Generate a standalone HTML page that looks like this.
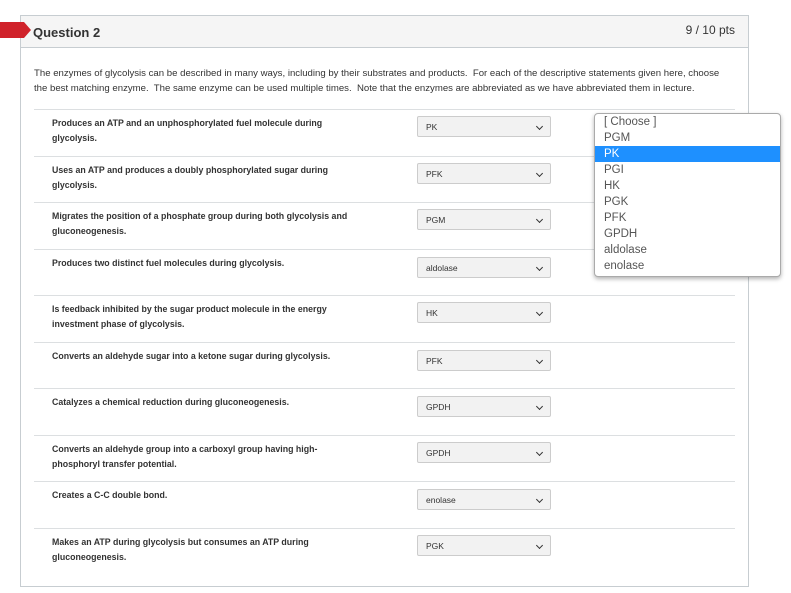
<!DOCTYPE html><html><head><style>
body{margin:0;background:#fff;font-family:"Liberation Sans",sans-serif;color:#2d3b45;position:relative;width:791px;height:593px;overflow:hidden}
.panel{position:absolute;left:20px;top:15px;width:727px;height:570px;border:1px solid #c7cdd1}
.hdr{height:31px;background:#f5f5f5;border-bottom:1px solid #c7cdd1;position:relative}
.hdr .t{position:absolute;left:12px;top:9px;font-size:13px;font-weight:bold;color:#333}
.hdr .p{position:absolute;right:13px;top:7px;font-size:12px;color:#333}
.flag{position:absolute;left:0;top:22px;z-index:2}
.intro{position:absolute;left:13px;top:51px;font-size:9.6px;line-height:14.5px;color:#333;width:710px;white-space:nowrap}
.row{position:absolute;left:13px;width:701px;border-top:1px solid #dcdfe1;height:46px}
.q{position:absolute;left:18px;top:6px;width:300px;font-size:8.8px;font-weight:bold;line-height:15px;color:#333}
.sel{position:absolute;left:383px;top:6px;width:134px;height:21px;background:#f2f2f2;border:1px solid #ccc;border-radius:2px;font-size:8.5px;line-height:21px;color:#333;box-sizing:border-box;padding-left:8px}
.sel:after{content:"";position:absolute;right:8px;top:7px;width:4px;height:4px;border-right:1.5px solid #333;border-bottom:1.5px solid #333;transform:rotate(45deg)}
.dd{position:absolute;left:594px;top:113px;width:185px;height:162px;background:#fff;border:1px solid #aaa;border-radius:4px;box-shadow:0 2px 4px rgba(0,0,0,.3);font-size:11.5px;color:#555;overflow:hidden}
.dd div{height:16px;line-height:16px;padding-left:9px}
.dd .h{background:#1e90ff;color:#fff}
</style></head><body>
<svg class="flag" width="32" height="16"><polygon points="0,0 24,0 31,8 24,16 0,16" fill="#d0222a"/></svg>
<div class="panel">
<div class="hdr"><span class="t">Question 2</span><span class="p">9 / 10 pts</span></div>
<div class="intro">The enzymes of glycolysis can be described in many ways, including by their substrates and products.&nbsp; For each of the descriptive statements given here, choose<br>the best matching enzyme.&nbsp; The same enzyme can be used multiple times.&nbsp; Note that the enzymes are abbreviated as we have abbreviated them in lecture.</div>
<div class="row" style="top:93px"><div class="q">Produces an ATP and an unphosphorylated fuel molecule during glycolysis.</div><div class="sel">PK</div></div>
<div class="row" style="top:140px"><div class="q">Uses an ATP and produces a doubly phosphorylated sugar during glycolysis.</div><div class="sel">PFK</div></div>
<div class="row" style="top:186px"><div class="q">Migrates the position of a phosphate group during both glycolysis and gluconeogenesis.</div><div class="sel">PGM</div></div>
<div class="row" style="top:233px"><div class="q">Produces two distinct fuel molecules during glycolysis.</div><div class="sel" style="top:7px">aldolase</div></div>
<div class="row" style="top:279px"><div class="q">Is feedback inhibited by the sugar product molecule in the energy investment phase of glycolysis.</div><div class="sel">HK</div></div>
<div class="row" style="top:326px"><div class="q">Converts an aldehyde sugar into a ketone sugar during glycolysis.</div><div class="sel" style="top:7px">PFK</div></div>
<div class="row" style="top:372px"><div class="q">Catalyzes a chemical reduction during gluconeogenesis.</div><div class="sel" style="top:7px">GPDH</div></div>
<div class="row" style="top:419px"><div class="q">Converts an aldehyde group into a carboxyl group having high-phosphoryl transfer potential.</div><div class="sel">GPDH</div></div>
<div class="row" style="top:465px"><div class="q">Creates a C-C double bond.</div><div class="sel" style="top:7px">enolase</div></div>
<div class="row" style="top:512px;height:50px"><div class="q">Makes an ATP during glycolysis but consumes an ATP during gluconeogenesis.</div><div class="sel">PGK</div></div>
</div>
<div class="dd"><div>[ Choose ]</div><div>PGM</div><div class="h">PK</div><div>PGI</div><div>HK</div><div>PGK</div><div>PFK</div><div>GPDH</div><div>aldolase</div><div>enolase</div></div>
</body></html>
